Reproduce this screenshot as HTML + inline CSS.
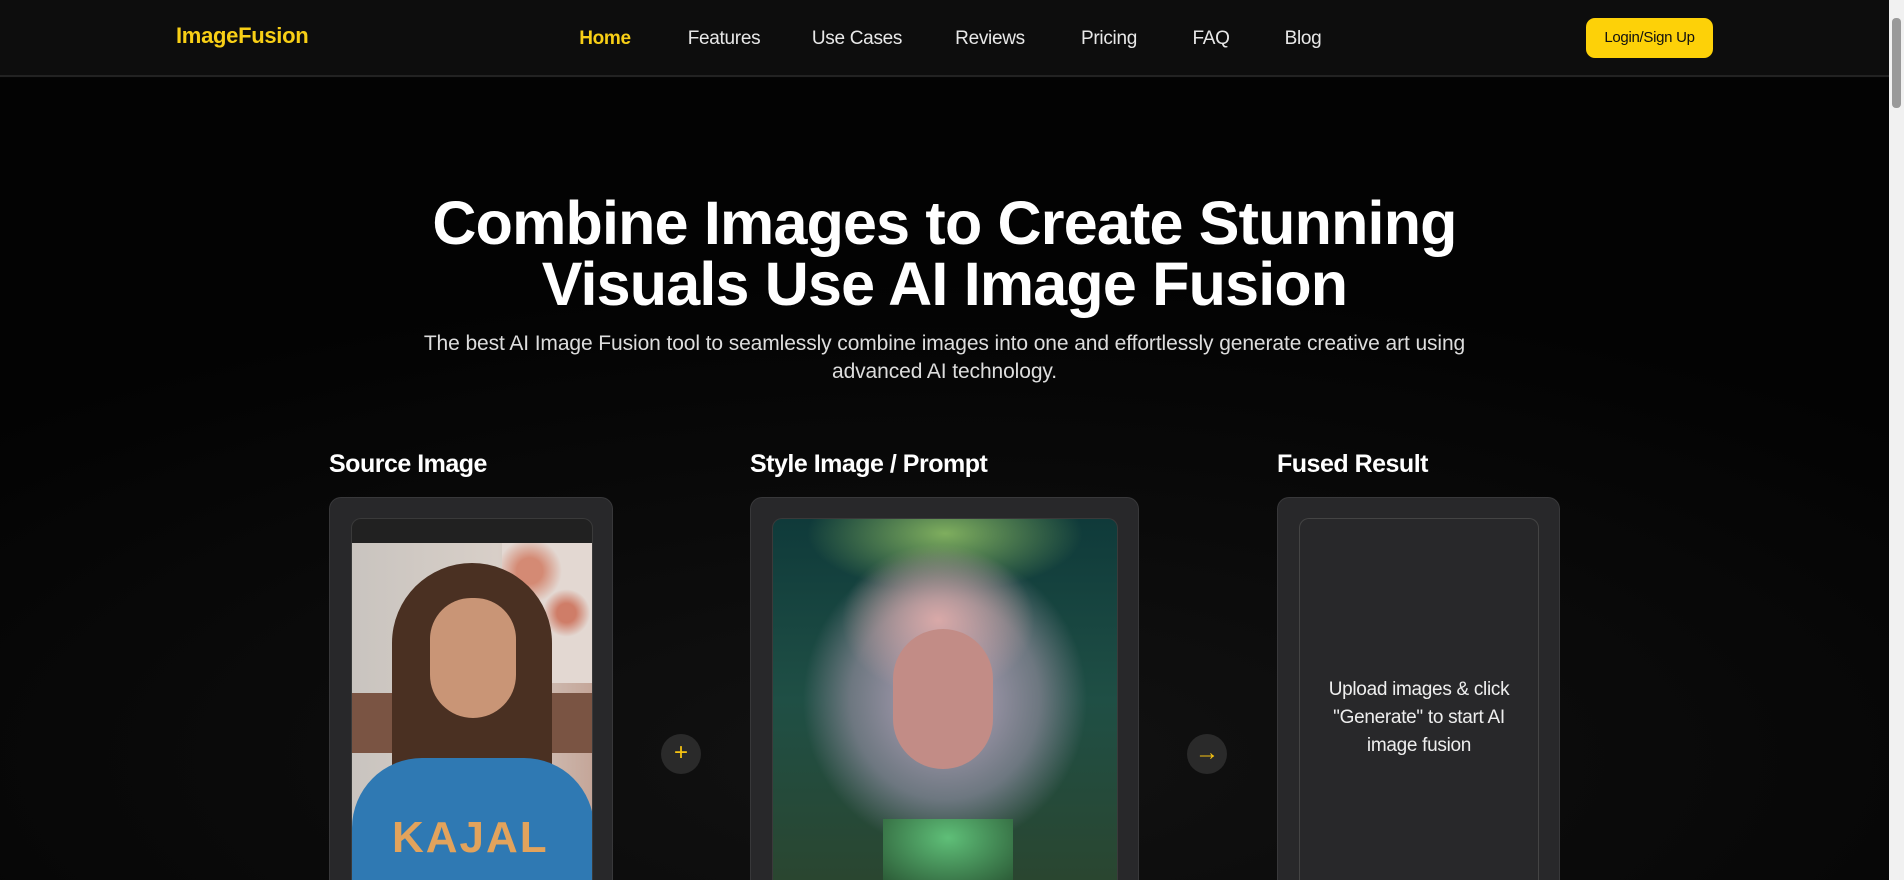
<!DOCTYPE html>
<html><head><meta charset="utf-8"><style>
*{margin:0;padding:0;box-sizing:border-box}
html,body{width:1904px;height:880px;overflow:hidden;background:#050505;font-family:"Liberation Sans",sans-serif;color:#fff}
#w{position:relative;width:1904px;height:880px;overflow:hidden}
.nav{position:absolute;left:0;top:0;width:1889px;height:77px;background:#0d0d0d;border-bottom:2px solid #222}
.logo{position:absolute;left:176px;top:23px;font-size:22px;font-weight:bold;color:#f8cf16;letter-spacing:-0.3px}
.nav a{position:absolute;top:28px;font-size:19px;color:#e8e8e8;transform:translateX(-50%);letter-spacing:-0.3px;white-space:nowrap}
.btn{position:absolute;left:1586px;top:18px;width:127px;height:40px;background:#fdd108;border-radius:9px;color:#111;font-size:15px;text-align:center;line-height:40px;letter-spacing:-0.3px}
.sb{position:absolute;left:1889px;top:0;width:15px;height:880px;background:#f1f1f1}
.sb i{position:absolute;left:3px;top:18px;width:9px;height:90px;background:#999;border-radius:4px}
.main{position:absolute;left:0;top:78px;width:1889px;height:802px;background:radial-gradient(ellipse 70% 60% at 50% 85%,#121212,#030303)}
h1{position:absolute;top:193px;left:0;width:1889px;text-align:center;font-size:61px;line-height:61px;font-weight:bold;letter-spacing:-0.8px}
.sub{position:absolute;top:330px;left:0;width:1889px;text-align:center;font-size:21px;line-height:28px;color:#ddd;letter-spacing:-0.1px}
h2{position:absolute;top:450px;font-size:25px;font-weight:bold;letter-spacing:-0.5px}
.card{position:absolute;top:497px;height:383px;background:#28282a;border:1px solid #38383a;border-bottom:none;border-radius:12px 12px 0 0;overflow:hidden}
.inner{position:absolute;top:20px;border-radius:10px 10px 0 0;overflow:hidden;background:#212121;border:1px solid #3a3a3a;border-bottom:none;height:363px}
.circ{position:absolute;top:734px;width:40px;height:40px;border-radius:50%;background:#2a2a2a;color:#f6c312;text-align:center;line-height:38px;font-size:24px}
</style></head><body><div id="w">
<div class="main"></div>
<div class="nav">
<div class="logo">ImageFusion</div>
<a style="left:605px;color:#f8cf16;font-weight:bold">Home</a>
<a style="left:724px">Features</a>
<a style="left:857px">Use Cases</a>
<a style="left:990px">Reviews</a>
<a style="left:1109px">Pricing</a>
<a style="left:1211px">FAQ</a>
<a style="left:1303px">Blog</a>
<div class="btn">Login/Sign Up</div>
</div>
<div class="sb"><i></i></div>
<h1>Combine Images to Create Stunning<br>Visuals Use AI Image Fusion</h1>
<div class="sub">The best AI Image Fusion tool to seamlessly combine images into one and effortlessly generate creative art using<br>advanced AI technology.</div>
<h2 style="left:329px">Source Image</h2>
<h2 style="left:750px">Style Image / Prompt</h2>
<h2 style="left:1277px">Fused Result</h2>

<div class="card" style="left:329px;width:284px">
 <div class="inner" style="left:21px;width:242px">
  <div style="position:absolute;top:24px;left:0;width:242px;height:340px;overflow:hidden;background:linear-gradient(90deg,#c9c4bf 0%,#d8cfc8 60%,#c4a598 100%)">
   <div style="position:absolute;left:150px;top:0;width:92px;height:140px;background:radial-gradient(circle at 30% 20%,#d48a74 10%,transparent 25%),radial-gradient(circle at 70% 50%,#cf7d68 10%,transparent 25%),#e3d8d2"></div>
   <div style="position:absolute;left:0;top:150px;width:242px;height:60px;background:#7a5443"></div>
   <div style="position:absolute;left:40px;top:20px;width:160px;height:260px;border-radius:80px 80px 30px 30px;background:#4a3022"></div>
   <div style="position:absolute;left:78px;top:55px;width:86px;height:120px;border-radius:43px 43px 45px 45px;background:#c99576"></div>
   <div style="position:absolute;left:0;top:215px;width:242px;height:200px;border-radius:70px 70px 0 0;background:#2f79b3"></div>
   <div style="position:absolute;left:40px;top:270px;font-size:44px;font-weight:bold;color:#e2a35c;letter-spacing:2px">KAJAL</div>
  </div>
 </div>
</div>
<div class="circ" style="left:661px">+</div>

<div class="card" style="left:750px;width:389px">
 <div class="inner" style="left:21px;width:346px;background:radial-gradient(ellipse 40% 30% at 48% 28%,#d9a9a8,transparent 70%),radial-gradient(ellipse 55% 55% at 50% 50%,#b9a7c0 0%,#6d7780 50%,transparent 75%),radial-gradient(ellipse 50% 20% at 50% 4%,#7fae5e,transparent 80%),linear-gradient(180deg,#0f3a3a,#1f4f45 50%,#2a4630)">
  <div style="position:absolute;left:120px;top:110px;width:100px;height:140px;border-radius:50px;background:#c28c86"></div>
  <div style="position:absolute;left:110px;top:300px;width:130px;height:63px;background:radial-gradient(ellipse at 50% 30%,#5fbf78,#2b5a36)"></div>
 </div>
</div>
<div class="circ" style="left:1187px">→</div>

<div class="card" style="left:1277px;width:283px">
 <div class="inner" style="left:21px;width:240px;background:#28282a;border-color:#444">
  <div style="position:absolute;top:157px;left:0;width:238px;text-align:center;font-size:19px;line-height:28px;color:#eee;letter-spacing:-0.3px">Upload images &amp; click<br>"Generate" to start AI<br>image fusion</div>
 </div>
</div>
</div></body></html>
